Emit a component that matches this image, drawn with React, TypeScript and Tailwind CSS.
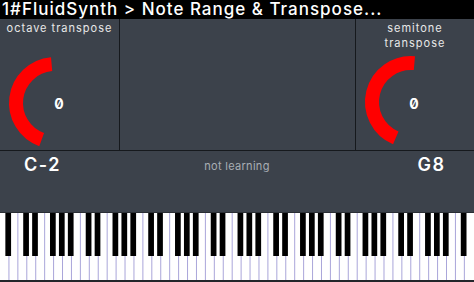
import React from "react";

function arcPath(cx: number, cy: number, r: number, t1: number, t2: number) {
  const rad = (d: number) => (d * Math.PI) / 180;
  const x1 = cx + r * Math.sin(rad(t1));
  const y1 = cy - r * Math.cos(rad(t1));
  const x2 = cx + r * Math.sin(rad(t2));
  const y2 = cy - r * Math.cos(rad(t2));
  let sweep = t2 - t1;
  if (sweep < 0) sweep += 360;
  const large = sweep > 180 ? 1 : 0;
  return `M ${x1.toFixed(2)} ${y1.toFixed(2)} A ${r} ${r} 0 ${large} 1 ${x2.toFixed(2)} ${y2.toFixed(2)}`;
}

function Knob({
  w,
  h,
  cx,
  cy,
  t1,
  t2,
  tx,
  ty,
}: {
  w: number;
  h: number;
  cx: number;
  cy: number;
  t1: number;
  t2: number;
  tx: number;
  ty: number;
}) {
  return (
    <svg width={w} height={h} className="block">
      <path d={arcPath(cx, cy, 39, t1, t2)} stroke="#ff0000" strokeWidth={14} fill="none" />
      <text
        x={tx}
        y={ty}
        textAnchor="middle"
        fill="#ffffff"
        fontSize={14}
        fontWeight={700}
        className="slashed-zero [font-feature-settings:'zero'_1]"
      >
        0
      </text>
    </svg>
  );
}

function Keyboard() {
  const W = 474;
  const H = 69;
  const n = 53;
  const kw = 8.93;
  const lines = [];
  const blacks = [];
  for (let i = 0; i < n; i++) {
    const x = i * kw;
    if (i > 0) {
      lines.push(<rect key={"l" + i} x={x - 0.5} y={0} width={1} height={H - 2} fill="#aaa6da" />);
    }
    const m = i % 7;
    if ((m === 0 || m === 2 || m === 3 || m === 5 || m === 6) && i < n - 1) {
      blacks.push(<rect key={"b" + i} x={x + kw * 0.6} y={0} width={kw * 0.64} height={43} fill="#000000" />);
    }
  }
  return (
    <svg width={W} height={H} className="block">
      <rect x={0} y={0} width={W} height={H} fill="#ffffff" />
      {lines}
      {blacks}
      <rect x={0} y={H - 2} width={W} height={2} fill="#23262b" />
    </svg>
  );
}

export default function App() {
  return (
    <div className="w-[474px] h-[282px] bg-[#3c424b] flex flex-col overflow-hidden font-['Inter',sans-serif] text-white">
      <div className="h-[19px] bg-black pl-[2px] text-[17px] leading-[19px] font-medium tracking-[1px] whitespace-nowrap overflow-hidden">
        1#FluidSynth &gt; Note Range &amp; Transpose...
      </div>
      <div className="h-[132px] flex border-b border-[#16191d]">
        <div className="w-[120px] border-r border-[#16191d] flex flex-col">
          <div className="pt-[2px] text-[11px] leading-[15px] text-center text-[#e8e8e8] tracking-[1px] whitespace-nowrap">
            octave transpose
          </div>
          <Knob w={119} h={114} cx={55} cy={67} t1={200} t2={355} tx={59} ty={73} />
        </div>
        <div className="flex-1 border-r border-[#16191d]"></div>
        <div className="w-[118px] flex flex-col">
          <div className="pt-[2px] text-[11px] leading-[15px] text-center text-[#e8e8e8] tracking-[1px]">
            semitone
            <br />
            transpose
          </div>
          <Knob w={118} h={99} cx={55} cy={51} t1={203} t2={5} tx={58} ty={58} />
        </div>
      </div>
      <div className="h-[62px] flex border-b border-[#2a2e34]">
        <div className="w-[85px] pt-[4px] text-center text-[18px] leading-[20px] font-semibold tracking-[1.5px]">
          C-2
        </div>
        <div className="flex-1 pt-[8px] text-center text-[11px] leading-[15px] text-[#a9aeb4] tracking-[0.3px]">
          not learning
        </div>
        <div className="w-[85px] pt-[4px] text-center text-[18px] leading-[20px] font-semibold tracking-[1.5px]">
          G8
        </div>
      </div>
      <Keyboard />
    </div>
  );
}
